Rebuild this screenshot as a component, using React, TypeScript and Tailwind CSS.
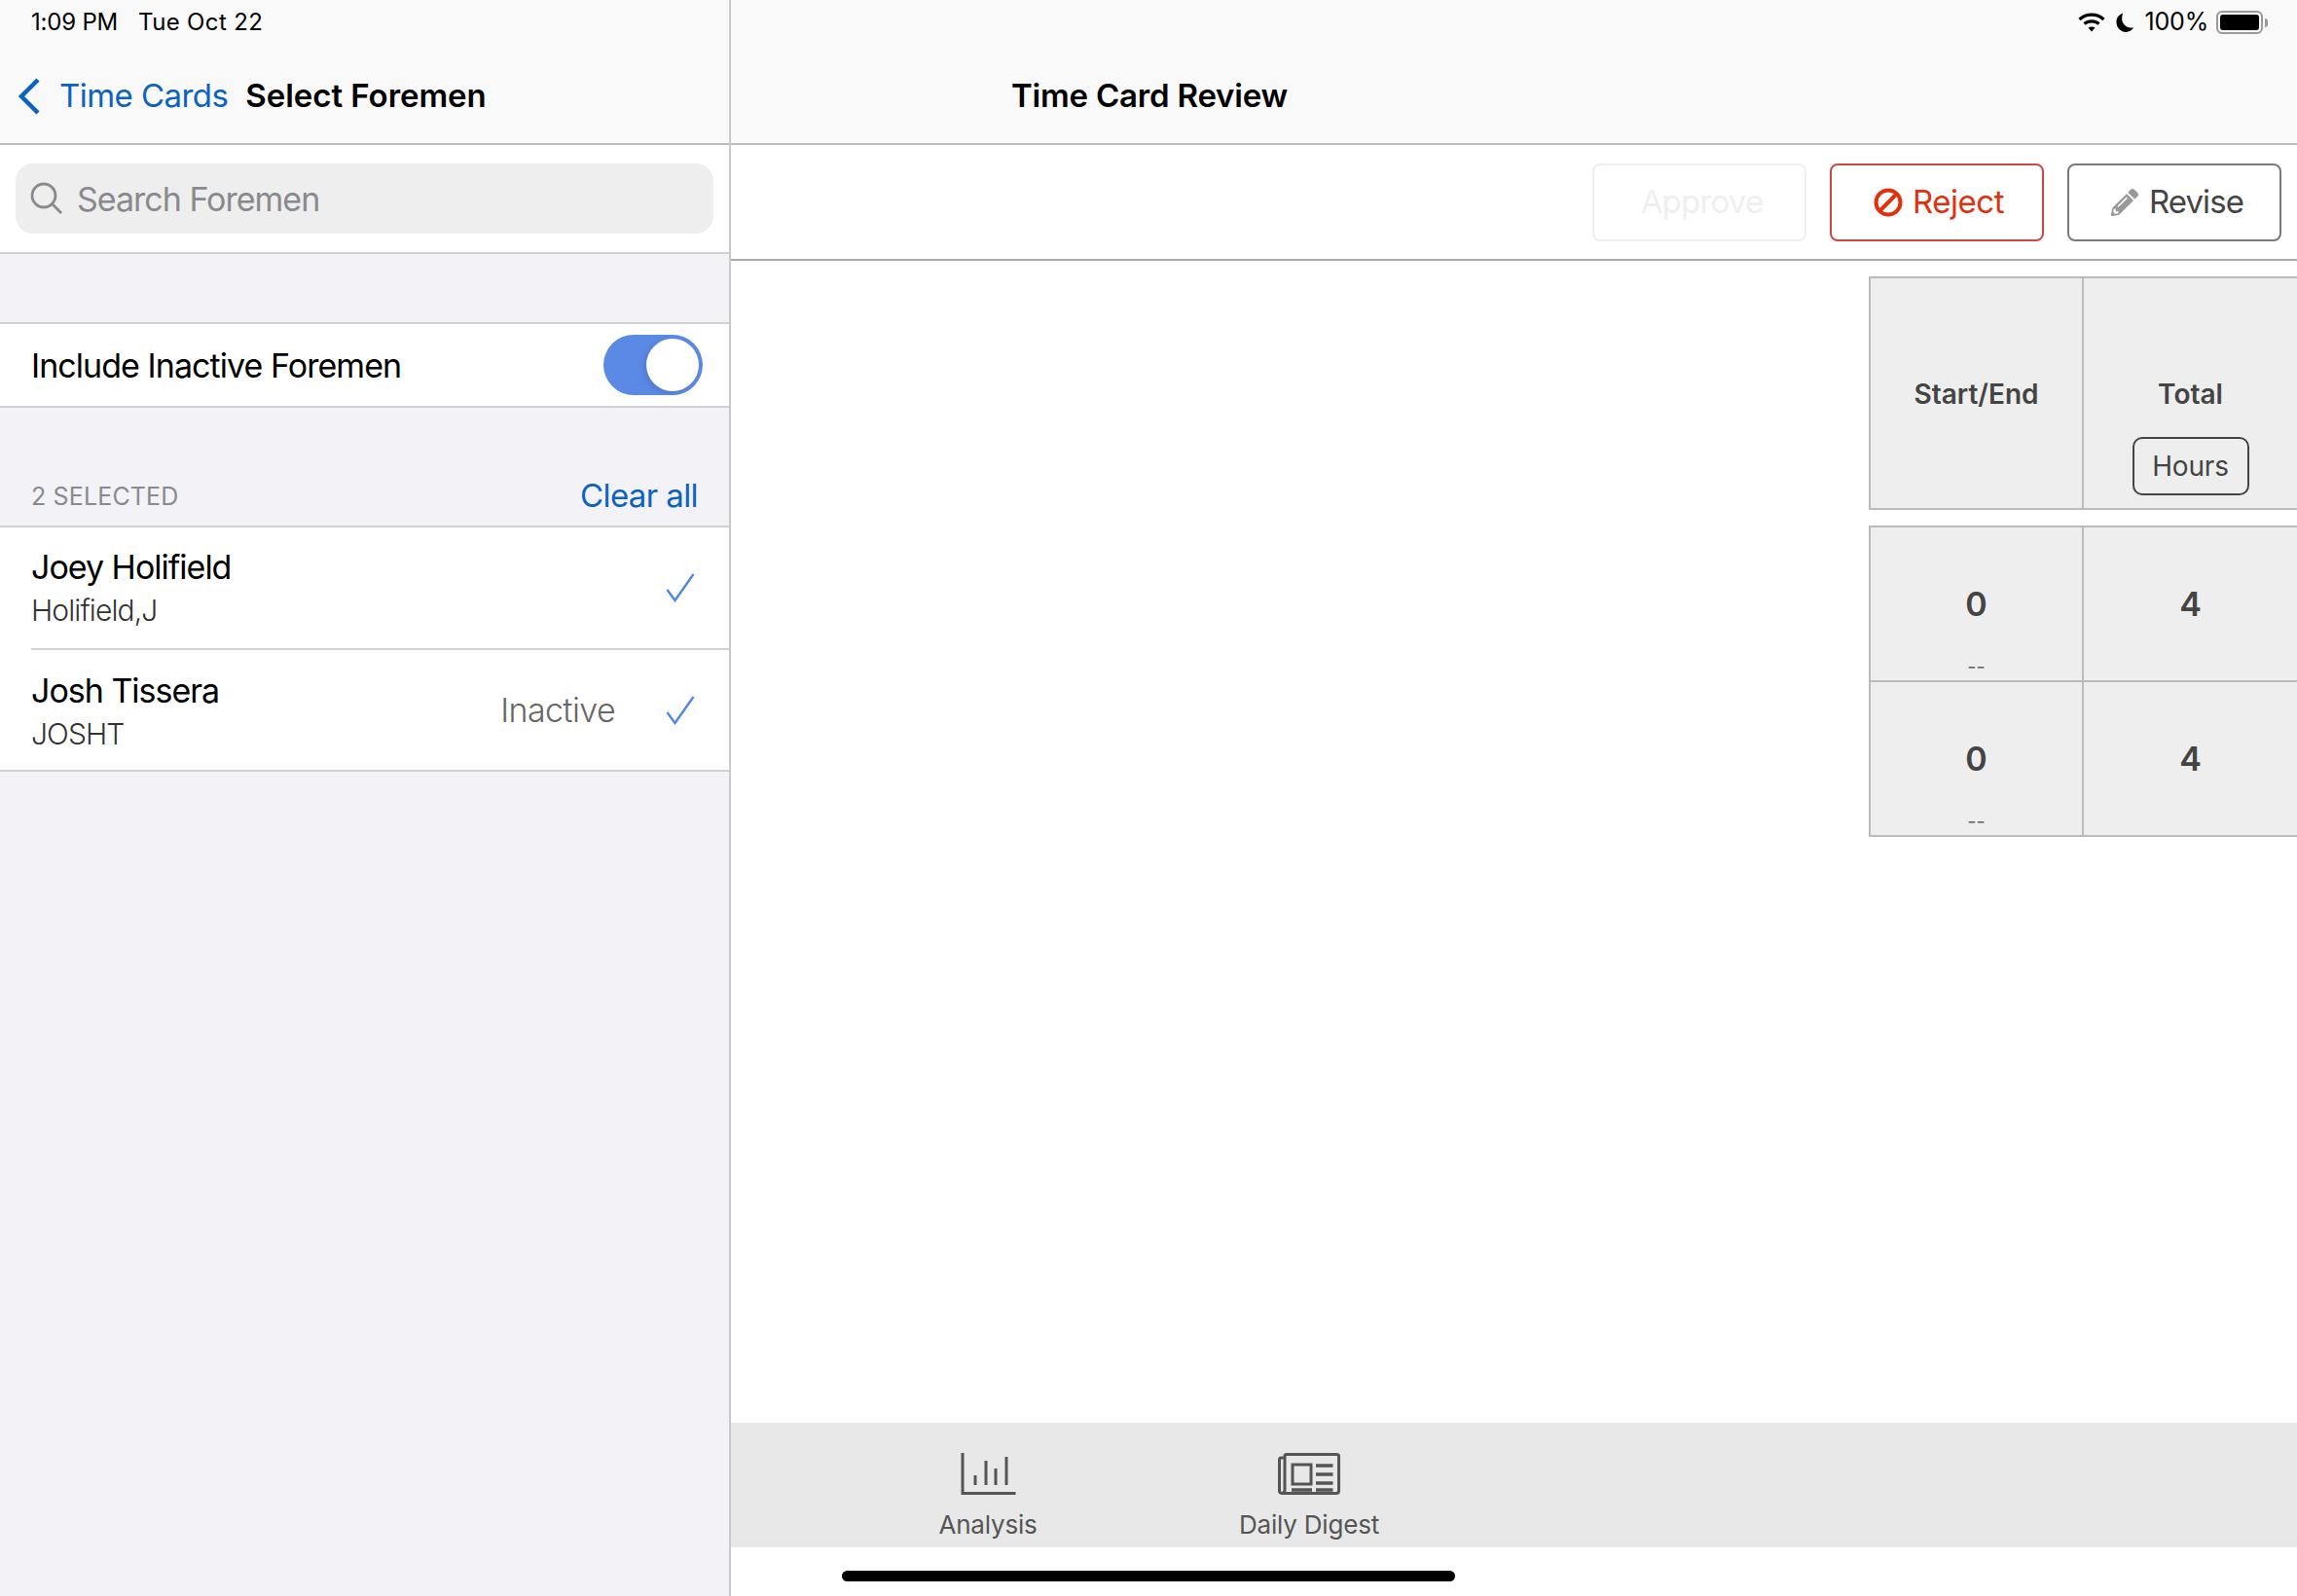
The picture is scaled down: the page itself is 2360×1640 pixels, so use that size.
import { FaPencilAlt } from 'react-icons/fa';

const people = [
  { name: 'Joey Holifield', code: 'Holifield,J', inactive: false },
  { name: 'Josh Tissera', code: 'JOSHT', inactive: true },
];

const rows = [
  { hours: '0', total: '4' },
  { hours: '0', total: '4' },
];

function Check() {
  return (
    <svg width="30" height="30" viewBox="0 0 30 30" fill="none" stroke="#4f86ea" strokeWidth="2.4">
      <path d="M1.5 17 L9.5 28 L28.5 1" />
    </svg>
  );
}

function Wifi() {
  return (
    <svg width="28" height="20" viewBox="0 0 28 20" fill="none" stroke="#000" strokeWidth="3.2">
      <path d="M1.5 7 C8.5 0.5 19.5 0.5 26.5 7" />
      <path d="M6.5 11.5 C10.5 8 17.5 8 21.5 11.5" />
      <path d="M14 19.5 L10.5 15.6 C12.5 14.2 15.5 14.2 17.5 15.6 Z" fill="#000" stroke="none" />
    </svg>
  );
}

function Moon() {
  return (
    <svg width="19" height="21" viewBox="0 0 20 20" preserveAspectRatio="none">
      <path d="M7.5 0.5 C2.5 2 0 6 0.6 10.5 C1.4 16 6.5 19.5 11.5 19 C14.8 18.7 17.5 17 19.2 14.6 C13 15.6 8 12.5 6.8 8 C6.2 5.5 6.5 3 7.5 0.5 Z" fill="#000" />
    </svg>
  );
}

function Battery() {
  return (
    <div className="flex items-center gap-[2px]">
      <div className="w-[48px] h-[24px] rounded-[6px] border-2 border-[#999] p-[2px]">
        <div className="w-full h-full rounded-[3px] bg-black" />
      </div>
      <div className="w-[3px] h-[9px] rounded-r-full bg-[#999]" />
    </div>
  );
}

function RejectIcon() {
  return (
    <svg width="30" height="30" viewBox="0 0 30 30" fill="none" stroke="#e0310f" strokeWidth="4">
      <circle cx="15" cy="15" r="12.5" />
      <path d="M6.5 23.5 L23.5 6.5" />
    </svg>
  );
}

function AnalysisIcon() {
  return (
    <svg width="57" height="43" viewBox="0 0 57 43" fill="none" stroke="#555" strokeWidth="3">
      <path d="M2 0 V41.5 H56.5" />
      <path d="M15 23 V33" />
      <path d="M26 8 V33" />
      <path d="M36 16 V33" />
      <path d="M47 4 V33" />
    </svg>
  );
}

function NewsIcon() {
  return (
    <svg width="64" height="43" viewBox="0 0 64 43" fill="none" stroke="#555" strokeWidth="3">
      <path d="M6 5 H3 Q1.5 5 1.5 7 V39 Q1.5 41.5 5 41.5 H60 Q62.5 41.5 62.5 39 V3 Q62.5 1.5 60 1.5 H9 Q7 1.5 7 3 V38 Q7 41.5 4 41.5" />
      <rect x="15" y="12" width="19" height="20" />
      <path d="M39 13 H56.5 M39 22 H56.5 M39 31 H56.5" strokeWidth="3.4" />
      <path d="M14 38 H35 M39 38 H56.5" strokeWidth="3.4" />
    </svg>
  );
}

export default function App() {
  return (
    <div className="flex w-[2360px] h-[1640px] overflow-hidden bg-white font-['Inter','Liberation_Sans',sans-serif]">
      {/* Left panel */}
      <div className="flex flex-col w-[751px] shrink-0 bg-[#f2f2f7] border-r-2 border-[#c9c9cc]">
        <div className="h-[149px] bg-[#f9f9f9] border-b-2 border-[#bdbdbd]">
          <div className="flex items-center gap-[21px] h-[46px] pl-[32px] text-[24px] text-black">
            <span className="tracking-[-0.2px]">1:09 PM</span>
            <span className="tracking-[0.35px]">Tue Oct 22</span>
          </div>
          <div className="flex items-center h-[50px] mt-[28px] pl-[18px]">
            <svg width="24" height="38" viewBox="0 0 24 38" fill="none" stroke="#0b63c1" strokeWidth="4.5">
              <path d="M21 2 L4 19 L21 36" />
            </svg>
            <span className="ml-[19px] text-[33px] tracking-[-0.55px] text-[#0b63c1]">Time Cards</span>
            <span className="ml-[18px] text-[33px] font-semibold tracking-[-0.05px] text-black">Select Foremen</span>
          </div>
        </div>

        <div className="h-[112px] px-[16px] pt-[19px] bg-white border-b-2 border-[#d0d0d3]">
          <div className="flex items-center h-[72px] rounded-[18px] bg-[#eeeeef] pl-[15px]">
            <svg width="34" height="34" viewBox="0 0 34 34" fill="none" stroke="#8a8a8e" strokeWidth="2.8">
              <circle cx="14" cy="14" r="12" />
              <path d="M23 23 L32 32" />
            </svg>
            <span className="ml-[14px] text-[34px] tracking-[-1px] text-[#8a8a8e]">Search Foremen</span>
          </div>
        </div>

        <div className="flex items-center justify-between h-[88px] mt-[70px] pl-[32px] pr-[27px] bg-white border-y-2 border-[#d0d0d3]">
          <span className="text-[34px] tracking-[-0.95px] text-black">Include Inactive Foremen</span>
          <div className="flex items-center justify-end w-[102px] h-[62px] rounded-full bg-[#5b8ae6] pr-[4px]">
            <div className="w-[54px] h-[54px] rounded-full bg-white shadow-[-3px_2px_6px_rgba(0,0,0,0.12)]" />
          </div>
        </div>

        <div className="flex items-end justify-between h-[121px] pl-[32px] pr-[32px] pb-[11px]">
          <span className="text-[25px] tracking-[0.15px] text-[#8a8a8e]">2 SELECTED</span>
          <span className="text-[33px] leading-[40px] tracking-[-0.6px] text-[#0b63c1]">Clear all</span>
        </div>

        <div className="bg-white border-y-2 border-[#d0d0d3]">
          {people.map((p, i) => (
            <div key={p.name} className="pl-[32px]">
              <div className={`flex items-center pr-[35px] ${i > 0 ? 'h-[125px] border-t-2 border-[#d0d0d3]' : 'h-[124px]'}`}>
                <div className={`flex flex-col flex-1 ${i > 0 ? 'mt-[3px]' : ''}`}>
                  <span className="text-[34px] leading-[42px] tracking-[-1px] text-black">{p.name}</span>
                  <span className="mt-[3px] text-[30px] leading-[40px] font-light tracking-[-0.9px] text-[#333]">{p.code}</span>
                </div>
                {p.inactive && (
                  <span className="mr-[52px] text-[34px] font-light tracking-[-0.6px] text-[#666]">Inactive</span>
                )}
                <Check />
              </div>
            </div>
          ))}
        </div>
      </div>

      {/* Right panel */}
      <div className="flex flex-col flex-1 min-w-0">
        <div className="h-[149px] bg-[#f9f9f9] border-b-2 border-[#bdbdbd]">
          <div className="flex items-center justify-end gap-[8px] h-[46px] pr-[30px]">
            <Wifi />
            <span className="ml-[3px]"><Moon /></span>
            <span className="ml-[3px] text-[25px] tracking-[-0.2px] text-black">100%</span>
            <Battery />
          </div>
          <div className="flex items-center h-[50px] mt-[28px] pl-[288px]">
            <span className="text-[33px] font-semibold tracking-[-0.2px] text-black">Time Card Review</span>
          </div>
        </div>

        <div className="flex items-start justify-end gap-[24px] h-[119px] pt-[19px] pr-[16px] border-b-2 border-[#aaaaaa]">
          <div className="flex items-center justify-center w-[220px] h-[80px] pl-[5px] rounded-[8px] border-2 border-[#efefef] text-[33px] tracking-[-0.8px] text-[#efefef]">
            Approve
          </div>
          <div className="flex items-center justify-center gap-[10px] w-[220px] h-[80px] pl-[4px] rounded-[8px] border-2 border-[#d04545] text-[33px] tracking-[-0.5px] text-[#e0310f]">
            <RejectIcon />
            Reject
          </div>
          <div className="flex items-center justify-center gap-[11px] w-[220px] h-[80px] pl-[6px] rounded-[8px] border-2 border-[#7a7a7a] text-[33px] tracking-[-0.9px] text-[#444]">
            <FaPencilAlt size={28} color="#999" />
            Revise
          </div>
        </div>

        <div className="flex-1 flex flex-col items-end pt-[16px]">
          <div className="grid grid-cols-[219px_219px] h-[240px] bg-[#eeeeee] border-2 border-r-0 border-[#bbbbbb] text-[#444]">
            <div className="flex justify-center pt-[101px] border-r-2 border-[#bbbbbb] text-[28px] leading-[36px] font-semibold">
              Start/End
            </div>
            <div className="flex flex-col items-center pt-[101px] text-[28px] leading-[36px] font-semibold">
              Total
              <div className="flex items-center justify-center w-[120px] h-[60px] mt-[26px] rounded-[10px] border-2 border-[#444] text-[28px] font-normal tracking-[-0.2px]">
                Hours
              </div>
            </div>
          </div>
          <div className="mt-[16px] border-t-2 border-l-2 border-[#bbbbbb] bg-[#eeeeee] text-[#444]">
            {rows.map((r, i) => (
              <div key={i} className="grid grid-cols-[219px_219px] h-[159px] border-b-2 border-[#bbbbbb]">
                <div className="flex flex-col items-center pt-[58px] border-r-2 border-[#bbbbbb]">
                  <span className="text-[34px] leading-[42px] font-semibold">{r.hours}</span>
                  <span className="mt-[29px] text-[20px] leading-[28px] text-[#666]">--</span>
                </div>
                <div className="flex flex-col items-center pt-[58px]">
                  <span className="text-[34px] leading-[42px] font-semibold">{r.total}</span>
                </div>
              </div>
            ))}
          </div>
        </div>

        <div className="flex h-[128px] bg-[#e8e8e8] text-[#555]">
          <div className="flex flex-col items-center w-[140px] ml-[194px] pt-[31px]">
            <AnalysisIcon />
            <span className="mt-[15px] text-[26px] leading-[32px] tracking-[-0.2px]">Analysis</span>
          </div>
          <div className="flex flex-col items-center w-[200px] ml-[160px] pt-[31px]">
            <NewsIcon />
            <span className="mt-[15px] text-[26px] leading-[32px] tracking-[-0.2px]">Daily Digest</span>
          </div>
        </div>
        <div className="h-[50px] pt-[24px] pl-[114px]">
          <div className="w-[630px] h-[11px] rounded-full bg-black" />
        </div>
      </div>
    </div>
  );
}
